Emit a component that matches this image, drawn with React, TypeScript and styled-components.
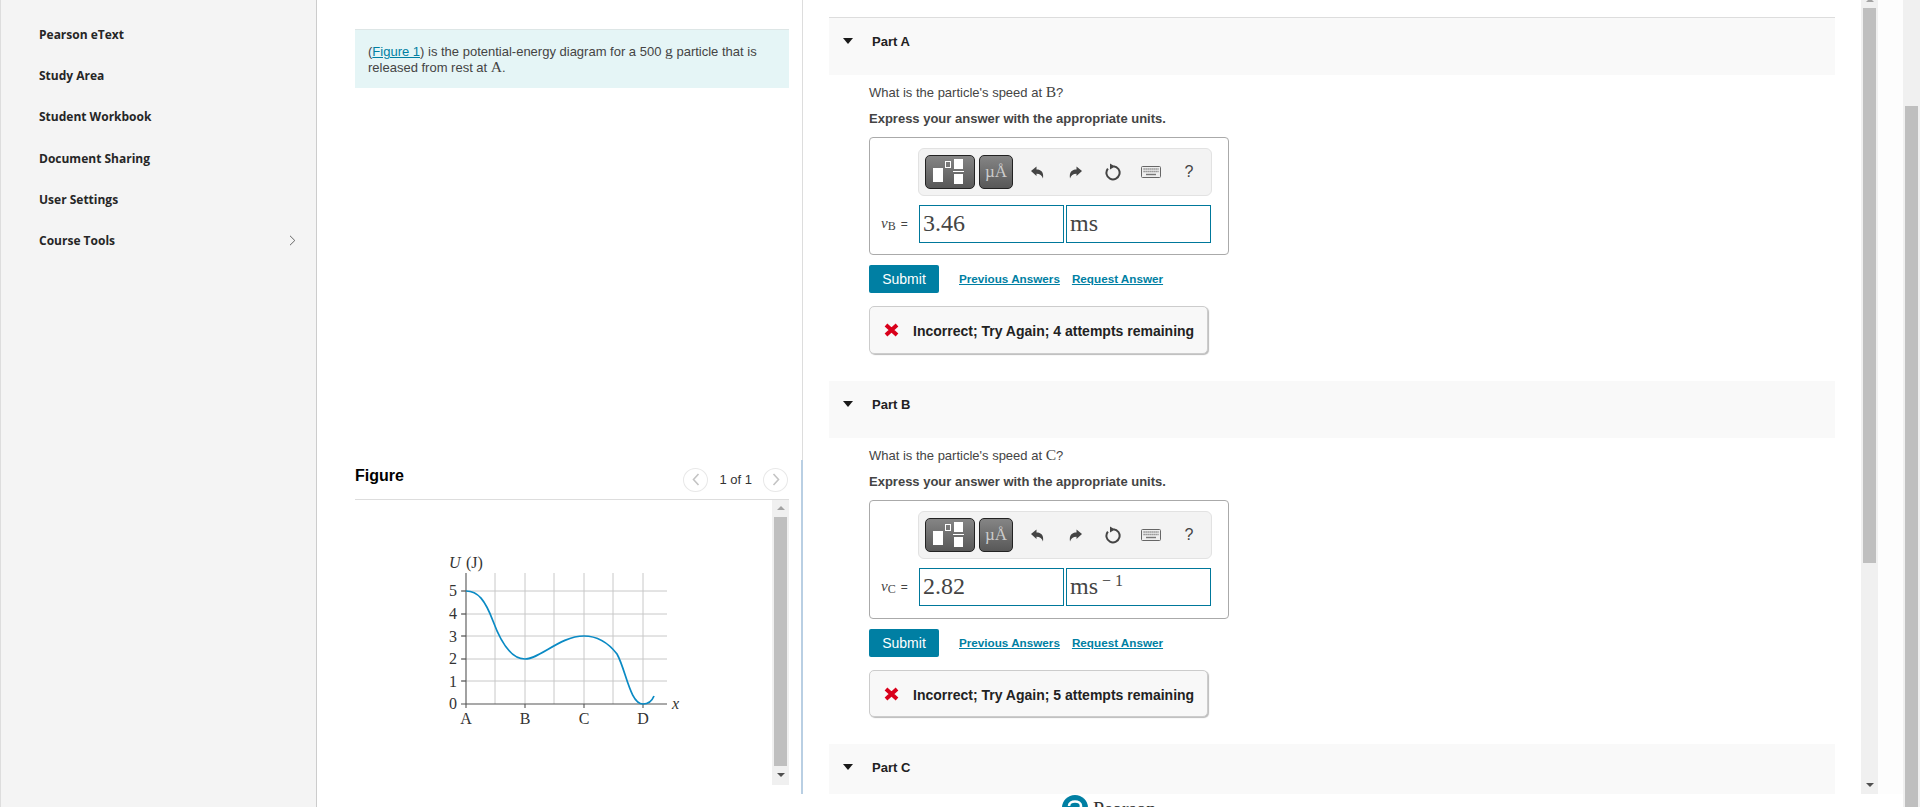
import React from 'react';
import styled, { createGlobalStyle } from 'styled-components';

const GlobalStyle = createGlobalStyle`
  html, body {
    margin: 0;
    padding: 0;
    height: 100%;
    overflow: hidden;
    background: #fff;
    font-family: "Liberation Sans", Arial, sans-serif;
  }
`;

const Page = styled.div`
  display: flex;
  width: 1920px;
  height: 807px;
  overflow: hidden;
`;

const Sidebar = styled.nav`
  box-sizing: border-box;
  flex: 0 0 317px;
  background: #f4f4f4;
  border-left: 1px solid #ddd;
  border-right: 1px solid #ccc;
  padding: 14px 0 0 38px;
`;

const NavItem = styled.div`
  display: flex;
  align-items: center;
  justify-content: space-between;
  height: 41.2px;
  padding-right: 20px;
  font-family: "Open Sans", sans-serif;
  font-size: 12px;
  font-weight: 700;
  color: #262626;
`;

const Main = styled.div`
  flex: 1;
  display: flex;
  flex-direction: column;
  min-width: 0;
`;

const Panes = styled.div`
  display: flex;
  height: 794px;
  flex: none;
  overflow: hidden;
`;

const LeftPane = styled.div`
  flex: 0 0 486px;
  display: flex;
  flex-direction: column;
`;

const Intro = styled.div`
  box-sizing: border-box;
  height: 460px;
  padding: 29px 13px 0 38px;
  border-right: 1px solid #ddd;
`;

const IntroBox = styled.div`
  box-sizing: border-box;
  height: 59px;
  padding: 14px 13px 0;
  background: #e5f5f6;
  border-top: 1px solid #dde6e6;
  font-size: 13px;
  line-height: 16px;
  color: #444;
`;

const Link = styled.a<{ $bold?: boolean }>`
  color: #007fa3;
  text-decoration: underline;
  font-weight: ${props => (props.$bold ? 'bold' : 'normal')};
`;

const MathText = styled.span`
  font-family: "Liberation Serif", serif;
  font-size: 1.2em;
  line-height: 0;
`;

const FigurePanel = styled.div`
  box-sizing: border-box;
  flex: 1;
  display: flex;
  flex-direction: column;
  padding: 0 12px 9px 38px;
  border-right: 2px solid #b9cfe3;
  min-height: 0;
`;

const FigureHeader = styled.div`
  flex: 0 0 39px;
  display: flex;
  align-items: center;
  border-bottom: 1px solid #ddd;
`;

const FigureTitle = styled.h3`
  flex: 1;
  margin: 0 0 7px;
  font-size: 16px;
  font-weight: bold;
  color: #000;
`;

const Pager = styled.div`
  display: flex;
  align-items: center;
  gap: 11px;
  margin-right: 1px;
  font-size: 13px;
  color: #333;
`;

const PagerButton = styled.span`
  box-sizing: border-box;
  display: flex;
  align-items: center;
  justify-content: center;
  width: 25px;
  height: 24px;
  border: 1px solid #e8e8e8;
  border-radius: 50%;
`;

const FigureBody = styled.div`
  flex: 1;
  display: flex;
  min-height: 0;
`;

const FigureImage = styled.div`
  flex: 1;
  padding-left: 75px;
`;

const ScrollTrack = styled.div`
  position: relative;
  box-sizing: border-box;
  flex: 0 0 17px;
  background: #f0f0f0;
`;

const ScrollThumb = styled.div<{ $top: number; $height: number }>`
  position: absolute;
  left: 2px;
  width: 13px;
  top: ${props => props.$top}px;
  height: ${props => props.$height}px;
  background: #bfbfbf;
`;

const ScrollArrow = styled.span<{ $up?: boolean; $top: number; $dark?: boolean }>`
  position: absolute;
  left: 5px;
  top: ${props => props.$top}px;
  width: 0;
  height: 0;
  border-left: 4px solid transparent;
  border-right: 4px solid transparent;
  ${props => (props.$up
    ? `border-bottom: 4px solid ${props.$dark ? '#505050' : '#a3a3a3'};`
    : `border-top: 4px solid ${props.$dark ? '#505050' : '#a3a3a3'};`)}
`;

const RightPane = styled.div`
  flex: 1;
  display: flex;
  padding-left: 26px;
  min-width: 0;
`;

const Parts = styled.div`
  flex: 0 0 1006px;
  margin-right: 26px;
  padding-top: 17px;
  overflow: hidden;
`;

const PartBlock = styled.section<{ $first?: boolean }>`
  margin-bottom: 27px;
  ${props => (props.$first ? 'border-top: 1px solid #ddd;' : '')}
`;

const PartHeader = styled.div`
  box-sizing: border-box;
  height: 57px;
  display: flex;
  padding: 15px 0 0 14px;
  background: #f9f9f9;
`;

const Caret = styled.span`
  width: 0;
  height: 0;
  margin: 5px 19px 0 0;
  border-left: 5px solid transparent;
  border-right: 5px solid transparent;
  border-top: 6px solid #1a1a1a;
`;

const PartTitle = styled.span`
  font-size: 13px;
  font-weight: bold;
  line-height: 18px;
  color: #222;
`;

const PartBody = styled.div`
  padding-left: 40px;
`;

const Question = styled.p`
  margin: 8px 0 0;
  font-size: 13px;
  line-height: 20px;
  color: #444;
`;

const Instruction = styled.p`
  margin: 6px 0 8px;
  font-size: 13px;
  font-weight: bold;
  line-height: 20px;
  color: #444;
`;

// the box with a superscript unit comes out 1px taller
const AnswerBox = styled.div<{ $tall?: boolean }>`
  box-sizing: border-box;
  width: 360px;
  height: ${props => (props.$tall ? 119 : 118)}px;
  padding: 10px 0 0 11px;
  border: 1px solid #aaa;
  border-radius: 4px;
`;

const Toolbar = styled.div`
  box-sizing: border-box;
  display: flex;
  align-items: center;
  width: 294px;
  height: 48px;
  margin-left: 37px;
  padding-left: 6px;
  background: #f3f3f3;
  border: 1px solid #e2e2e2;
  border-radius: 6px;
`;

const ToolButton = styled.span<{ $width: number }>`
  box-sizing: border-box;
  display: flex;
  align-items: center;
  justify-content: center;
  width: ${props => props.$width}px;
  height: 34px;
  margin-right: 4px;
  background: linear-gradient(#858585, #585858);
  border: 1px solid #222;
  border-radius: 5px;
  font-family: "Liberation Serif", serif;
  font-size: 17px;
  color: #ccc;
`;

const ToolIcon = styled.span`
  display: flex;
  align-items: center;
  justify-content: center;
  width: 38px;
  height: 34px;
  font-size: 16px;
  color: #444;
`;

const InputRow = styled.div`
  display: flex;
  align-items: center;
  margin-top: 9px;
`;

const VarLabel = styled.span`
  flex: 0 0 38px;
  font-size: 12px;
  color: #444;
  white-space: nowrap;
`;

const VarName = styled.i`
  font-family: "Liberation Serif", serif;
  font-size: 15px;
`;

const VarSub = styled.span`
  font-family: "Liberation Serif", serif;
  font-size: 12px;
  margin-right: 5px;
  vertical-align: -2px;
`;

const ValueField = styled.div`
  box-sizing: border-box;
  width: 145px;
  height: 38px;
  margin-right: 2px;
  padding: 0 3px;
  border: 1px solid #00789b;
  font-family: "Liberation Serif", serif;
  font-size: 24px;
  line-height: 34px;
  color: #444;
`;

const Exponent = styled.sup`
  margin-left: 4px;
  font-size: 16px;
  line-height: 0;
  vertical-align: 8px;
`;

const ActionRow = styled.div`
  display: flex;
  align-items: center;
  gap: 20px;
  margin-top: 10px;
`;

const SubmitButton = styled.button`
  width: 70px;
  height: 28px;
  padding: 0;
  background: #007fa3;
  border: none;
  border-radius: 2px;
  font-family: "Liberation Sans", Arial, sans-serif;
  font-size: 14px;
  color: #fff;
`;

const ActionLinks = styled.div`
  display: flex;
  gap: 12px;
  font-size: 11.7px;
  margin-top: -1px;
`;

const Feedback = styled.div<{ $short?: boolean }>`
  box-sizing: border-box;
  display: flex;
  align-items: center;
  gap: 14px;
  width: 339px;
  height: ${props => (props.$short ? 47 : 48)}px;
  margin-top: 13px;
  padding-left: 14px;
  background: #f8f8f8;
  border: 1px solid #ccc;
  border-radius: 5px;
  box-shadow: 1px 1px 1px #bbb;
  font-size: 14px;
  font-weight: bold;
  color: #222;
`;

const FeedbackText = styled.span`
  padding-top: 2px;
`;

const OuterGap = styled.div`
  flex: 0 0 25px;
  background: #fdfdfd;
`;

const Footer = styled.footer`
  display: flex;
  align-items: flex-start;
  gap: 5px;
  height: 13px;
  overflow: hidden;
  padding: 1px 0 0 745px;
`;

const FooterName = styled.span`
  font-family: "Liberation Serif", serif;
  font-size: 20px;
  line-height: 22px;
  margin-top: 3px;
  color: #333;
`;

const UndoIcon = ({ flip }: { flip?: boolean }) => (
  <svg width="15" height="15" viewBox="0 0 15 15" style={flip ? { transform: 'scaleX(-1)' } : undefined}>
    <path d="M1 6 L6.5 1.5 V4.5 C11 4.5 14 7 13 13.5 C12 10.5 10 8.8 6.5 8.8 V11 Z" fill="#444" />
  </svg>
);

const RefreshIcon = () => (
  <svg width="18" height="18" viewBox="0 0 18 18">
    <path d="M9.5 3.2 A6.6 6.6 0 1 1 3.9 5.6" fill="none" stroke="#444" strokeWidth="2" />
    <path d="M6 0.5 L11 3.4 L6 6.6 Z" fill="#444" />
  </svg>
);

const KeyboardIcon = () => (
  <svg width="20" height="12" viewBox="0 0 20 12">
    <rect x="0.5" y="0.5" width="19" height="11" rx="1" fill="#eee" stroke="#666" />
    <path d="M2.5 3 H17.5 M2.5 5.5 H17.5" stroke="#777" strokeWidth="1.4" strokeDasharray="1.2 .8" />
    <path d="M5 8.5 H15" stroke="#777" strokeWidth="1.4" />
  </svg>
);

const TemplateIcon = () => (
  <svg width="48" height="32" viewBox="0 0 48 32">
    <rect x="7" y="12" width="10" height="14" fill="#fff" />
    <rect x="19.5" y="5.5" width="5" height="6" fill="none" stroke="#fff" />
    <rect x="28" y="3" width="9" height="10" fill="#fff" />
    <rect x="27" y="15" width="11" height="1" fill="#fff" />
    <rect x="28" y="18" width="9" height="10" fill="#fff" />
  </svg>
);

const CrossIcon = () => (
  <svg width="15" height="14" viewBox="0 0 15 14">
    <path d="M2 2 L13 12 M13 2 L2 12" stroke="#d9001b" strokeWidth="4" strokeLinecap="butt" />
  </svg>
);

const PagerChevron = ({ right }: { right?: boolean }) => (
  <svg width="8" height="13" viewBox="0 0 8 13">
    <path d={right ? 'M1.5 1 L6.5 6.5 L1.5 12' : 'M6.5 1 L1.5 6.5 L6.5 12'} fill="none" stroke="#c4c4c4" strokeWidth="1.6" />
  </svg>
);

const NavChevron = () => (
  <svg width="7" height="11" viewBox="0 0 7 11">
    <path d="M1 0.8 L5.8 5.5 L1 10.2" fill="none" stroke="#666" strokeWidth="1" />
  </svg>
);

const PearsonLogo = () => (
  <svg width="26" height="26" viewBox="0 0 26 26">
    <circle cx="13" cy="13" r="13" fill="#007fa3" />
    <path d="M7 11 C7 5 19 5 19 11 C19 15 14 15 12 15" fill="none" stroke="#fff" strokeWidth="2.6" />
  </svg>
);

const gridX = [495, 525, 554, 584, 613, 643];
const gridY = [591, 614, 636, 659, 681];
const yLabels = ['5', '4', '3', '2', '1', '0'];
const xLabels: [string, number][] = [['A', 466], ['B', 525], ['C', 584], ['D', 643]];

// viewBox keeps the page coordinates I measured the plot in
const EnergyChart = () => (
  <svg width="260" height="200" viewBox="430 540 260 200" style={{ marginTop: 40, display: 'block' }}>
    <g stroke="#c8c8c8" strokeWidth="1">
      {gridX.map(x => <line key={x} x1={x} y1={573} x2={x} y2={704} />)}
      {gridY.map(y => <line key={y} x1={462} y1={y} x2={667} y2={y} />)}
    </g>
    <g stroke="#555" strokeWidth="1.1">
      <line x1={466} y1={573} x2={466} y2={708} />
      <line x1={461} y1={704} x2={667} y2={704} />
      {[525, 584, 643].map(x => <line key={x} x1={x} y1={704} x2={x} y2={708} />)}
      {gridY.map(y => <line key={y} x1={461} y1={y} x2={466} y2={y} />)}
    </g>
    <path
      d="M466 591 C478 591 485 600 493 621 C500 640 510 659 525 659 C540 659 560 636 584 636 C600 636 610 645 617 654 C626 670 630 704 643 704 C648 704 652 701 654 696"
      fill="none"
      stroke="#0a8ac4"
      strokeWidth="1.7"
    />
    <g fontFamily="'Liberation Serif', serif" fontSize="16" fill="#333">
      <text x="449" y="568" fontStyle="italic">U</text>
      <text x="466" y="568">(J)</text>
      {yLabels.map((label, i) => (
        <text key={label} x="453" y={[596, 619, 642, 664, 687, 709][i]} textAnchor="middle">{label}</text>
      ))}
      {xLabels.map(([label, x]) => (
        <text key={label} x={x} y="724" textAnchor="middle">{label}</text>
      ))}
      <text x="672" y="709" fontStyle="italic">x</text>
    </g>
  </svg>
);

const navItems = ['Pearson eText', 'Study Area', 'Student Workbook', 'Document Sharing', 'User Settings', 'Course Tools'];

type PartProps = {
  letter: string;
  point: string;
  value: string;
  exponent?: string;
  attempts: number;
  first?: boolean;
};

const Part: React.FC<PartProps> = ({ letter, point, value, exponent, attempts, first }) => (
  <PartBlock $first={first}>
    <PartHeader>
      <Caret />
      <PartTitle>Part {letter}</PartTitle>
    </PartHeader>
    <PartBody>
      <Question>What is the particle's speed at <MathText>{point}</MathText>?</Question>
      <Instruction>Express your answer with the appropriate units.</Instruction>
      <AnswerBox $tall={!!exponent}>
        <Toolbar>
          <ToolButton $width={50}><TemplateIcon /></ToolButton>
          <ToolButton $width={34}>µÅ</ToolButton>
          <ToolIcon style={{ marginLeft: 1 }}><UndoIcon /></ToolIcon>
          <ToolIcon><UndoIcon flip /></ToolIcon>
          <ToolIcon><RefreshIcon /></ToolIcon>
          <ToolIcon><KeyboardIcon /></ToolIcon>
          <ToolIcon>?</ToolIcon>
        </Toolbar>
        <InputRow>
          <VarLabel><VarName>v</VarName><VarSub>{point}</VarSub>=</VarLabel>
          <ValueField>{value}</ValueField>
          <ValueField>ms{exponent && <Exponent>{exponent}</Exponent>}</ValueField>
        </InputRow>
      </AnswerBox>
      <ActionRow>
        <SubmitButton>Submit</SubmitButton>
        <ActionLinks>
          <Link $bold>Previous Answers</Link>
          <Link $bold>Request Answer</Link>
        </ActionLinks>
      </ActionRow>
      <Feedback $short={!!exponent}>
        <CrossIcon />
        <FeedbackText>Incorrect; Try Again; {attempts} attempts remaining</FeedbackText>
      </Feedback>
    </PartBody>
  </PartBlock>
);

const App: React.FC = () => (
  <>
    <GlobalStyle />
    <Page>
      <Sidebar>
        {navItems.map(item => (
          <NavItem key={item}>
            {item}
            {item === 'Course Tools' && <NavChevron />}
          </NavItem>
        ))}
      </Sidebar>
      <Main>
        <Panes>
          <LeftPane>
            <Intro>
              <IntroBox>
                (<Link>Figure 1</Link>) is the potential-energy diagram for a 500 <MathText>g</MathText> particle that is
                released from rest at <MathText>A</MathText>.
              </IntroBox>
            </Intro>
            <FigurePanel>
              <FigureHeader>
                <FigureTitle>Figure</FigureTitle>
                <Pager>
                  <PagerButton><PagerChevron /></PagerButton>
                  <span>1 of 1</span>
                  <PagerButton><PagerChevron right /></PagerButton>
                </Pager>
              </FigureHeader>
              <FigureBody>
                <FigureImage><EnergyChart /></FigureImage>
                <ScrollTrack>
                  <ScrollArrow $up $top={6} />
                  <ScrollThumb $top={17} $height={249} />
                  <ScrollArrow $top={273} $dark />
                </ScrollTrack>
              </FigureBody>
            </FigurePanel>
          </LeftPane>
          <RightPane>
            <Parts>
              <Part first letter="A" point="B" value="3.46" attempts={4} />
              <Part letter="B" point="C" value="2.82" exponent="− 1" attempts={5} />
              <PartBlock>
                <PartHeader>
                  <Caret />
                  <PartTitle>Part C</PartTitle>
                </PartHeader>
              </PartBlock>
            </Parts>
            <ScrollTrack>
              <ScrollArrow $up $top={-2} />
              <ScrollThumb $top={8} $height={555} />
              <ScrollArrow $top={783} $dark />
            </ScrollTrack>
            <OuterGap />
          </RightPane>
        </Panes>
        <Footer>
          <PearsonLogo />
          <FooterName>Pearson</FooterName>
        </Footer>
      </Main>
      <ScrollTrack>
        <ScrollThumb $top={106} $height={701} />
      </ScrollTrack>
    </Page>
  </>
);

export default App;
